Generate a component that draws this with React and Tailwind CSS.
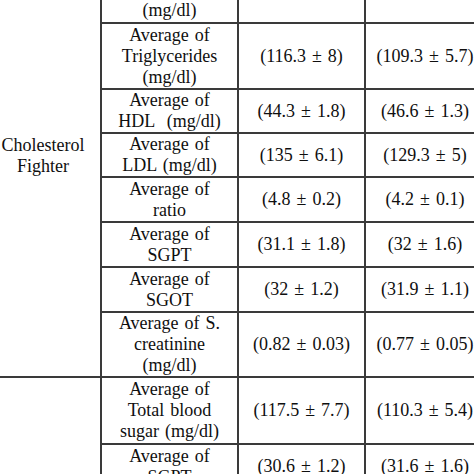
const line = "border-[#3a3a3a]";

const groups = [
    {
        label: ["Cholesterol", "Fighter"],
        rows: [
            { name: ["Average of", "Total", "cholesterol", "(mg/dl)"], a: "(178.4 ± 9.1)", b: "(169.2 ± 8.3)", h: "h-[88px]" },
            { name: ["Average of", "Triglycerides", "(mg/dl)"], a: "(116.3 ± 8)", b: "(109.3 ± 5.7)", h: "h-[66px]" },
            { name: ["Average of", "HDL  (mg/dl)"], a: "(44.3 ± 1.8)", b: "(46.6 ± 1.3)", h: "h-[44px]" },
            { name: ["Average of", "LDL (mg/dl)"], a: "(135 ± 6.1)", b: "(129.3 ± 5)", h: "h-[44px]" },
            { name: ["Average of", "ratio"], a: "(4.8 ± 0.2)", b: "(4.2 ± 0.1)", h: "h-[45px]" },
            { name: ["Average of", "SGPT"], a: "(31.1 ± 1.8)", b: "(32 ± 1.6)", h: "h-[45px]" },
            { name: ["Average of", "SGOT"], a: "(32 ± 1.2)", b: "(31.9 ± 1.1)", h: "h-[45px]" },
            { name: ["Average of S.", "creatinine", "(mg/dl)"], a: "(0.82 ± 0.03)", b: "(0.77 ± 0.05)", h: "h-[63px]" },
        ],
    },
    {
        label: [],
        rows: [
            { name: ["Average of", "Total blood", "sugar (mg/dl)"], a: "(117.5 ± 7.7)", b: "(110.3 ± 5.4)", h: "h-[67px]" },
            { name: ["Average of", "SGPT"], a: "(30.6 ± 1.2)", b: "(31.6 ± 1.6)", h: "h-[45px]" },
            { name: ["Average of", "SGOT"], a: "", b: "", h: "h-[45px]" },
        ],
    },
];

const Cell = ({ width, children }) => (
    <div className={`${width} shrink-0 border-r-2 ${line} flex flex-col items-center justify-center text-center`}>
        {children}
    </div>
);

export default function App() {
    return (
        <div className="w-[474px] h-[474px] overflow-hidden bg-white text-[#0f0f0f] font-['Liberation_Serif','Times_New_Roman',serif] text-[18px] leading-[21px] [word-spacing:1.5px]">
            <div className="-mt-[64px] w-[486px]">
                {groups.map((group, gi) => (
                    <div key={gi} className={`flex border-b-2 ${line}`}>
                        {/* Grupo */}
                        <div className={`w-[102px] shrink-0 border-r-2 ${line} flex flex-col items-center justify-center pr-[14px] text-center`}>
                            {group.label.map((t) => (
                                <span key={t}>{t}</span>
                            ))}
                        </div>

                        <div className="flex flex-col">
                            {group.rows.map((row, ri) => (
                                <div
                                    key={ri}
                                    className={`flex ${row.h} ${ri < group.rows.length - 1 ? `border-b-2 ${line}` : ""}`}
                                >
                                    <Cell width="w-[137px]">
                                        {row.name.map((t) => (
                                            <span key={t} className="whitespace-pre">{t}</span>
                                        ))}
                                    </Cell>
                                    <Cell width="w-[127px]">{row.a}</Cell>
                                    <Cell width="w-[120px]">{row.b}</Cell>
                                </div>
                            ))}
                        </div>
                    </div>
                ))}
            </div>
        </div>
    );
}
